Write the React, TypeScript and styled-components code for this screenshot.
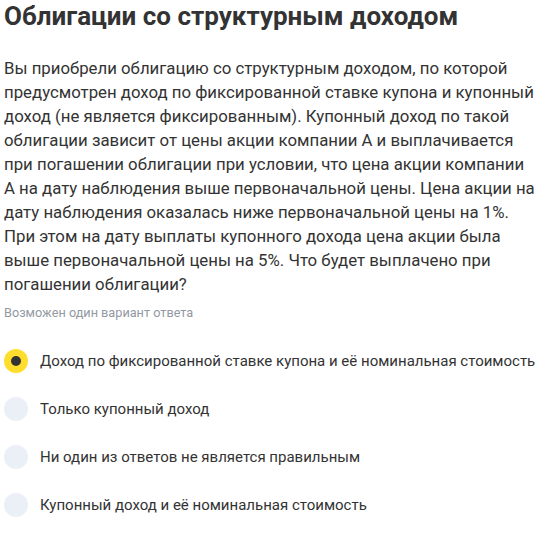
import React from "react";
import styled, { createGlobalStyle } from "styled-components";

const Global = createGlobalStyle`
  html, body { margin: 0; padding: 0; background: #fff; }
  body { font-family: Roboto, "Noto Sans", sans-serif; color: #333; }
`;

const Page = styled.div`
  padding: 0 4px;
  max-width: 533px;
  display: flex;
  flex-direction: column;
`;

const Title = styled.h1`
  margin: 0;
  font-size: 26px;
  line-height: 32px;
  font-weight: 700;
  color: #333;
  white-space: nowrap;
`;

const Question = styled.p`
  margin: 24px 0 0;
  font-size: 16.8px;
  line-height: 24px;
  color: #333;
`;

const Hint = styled.div`
  margin-top: 9px;
  font-size: 12.7px;
  line-height: 16px;
  color: #9299a2;
`;

const Options = styled.div`
  margin-top: 28px;
  display: flex;
  flex-direction: column;
  gap: 24px;
`;

const Option = styled.label`
  display: flex;
  align-items: center;
  gap: 12px;
  font-size: 15px;
  line-height: 24px;
  color: #333;
  white-space: nowrap;
  cursor: pointer;
`;

const Radio = styled.span<{ $checked?: boolean }>`
  flex: none;
  width: 24px;
  height: 24px;
  border-radius: 50%;
  background: ${(p) => (p.$checked ? "#ffdd2d" : "#ebeff6")};
  display: flex;
  align-items: center;
  justify-content: center;
  &::after {
    content: "";
    display: ${(p) => (p.$checked ? "block" : "none")};
    width: 10px;
    height: 10px;
    border-radius: 50%;
    background: #333;
  }
`;

const options = [
  "Доход по фиксированной ставке купона и её номинальная стоимость",
  "Только купонный доход",
  "Ни один из ответов не является правильным",
  "Купонный доход и её номинальная стоимость",
];

export default function App() {
  return (
    <>
      <Global />
      <Page>
        <Title>Облигации со структурным доходом</Title>
        <Question>
          Вы приобрели облигацию со структурным доходом, по которой предусмотрен доход по
          фиксированной ставке купона и купонный доход (не является фиксированным). Купонный
          доход по такой облигации зависит от цены акции компании А и выплачивается при
          погашении облигации при условии, что цена акции компании А на дату наблюдения выше
          первоначальной цены. Цена акции на дату наблюдения оказалась ниже первоначальной цены
          на 1%. При этом на дату выплаты купонного дохода цена акции была выше первоначальной
          цены на 5%. Что будет выплачено при погашении облигации?
        </Question>
        <Hint>Возможен один вариант ответа</Hint>
        <Options>
          {options.map((o, i) => (
            <Option key={i}>
              <Radio $checked={i === 0} />
              {o}
            </Option>
          ))}
        </Options>
      </Page>
    </>
  );
}
